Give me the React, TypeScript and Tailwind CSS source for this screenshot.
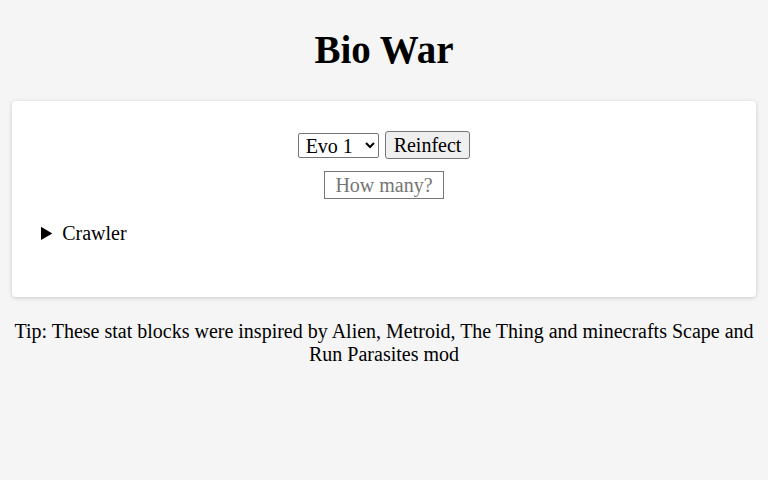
import React from 'react';

export default function App() {
  return (
    <div className="min-h-[480px] bg-[#f5f5f5] px-3 pt-[27px] text-[20px] leading-[23px] text-black" style={{ fontFamily: '"Liberation Serif", "Times New Roman", serif' }}>
      <h1 className="text-center text-[39px] font-bold leading-[45px]">Bio War</h1>
      <div className="mt-[29px] rounded-[4px] bg-white px-[29px] pb-[52px] pt-[30px] shadow-[0_1px_4px_rgba(0,0,0,0.18)]">
        <div className="flex items-center justify-center gap-[6px]">
          <select defaultValue="1" className="h-[25px] w-[81px] rounded-[2px] border border-[#767676] bg-white pl-[3px] text-[20px] leading-[23px]">
            <option value="1">Evo 1</option>
            <option value="2">Evo 2</option>
            <option value="3">Evo 3</option>
          </select>
          <button className="h-[28px] rounded-[3px] border border-[#767676] bg-[#efefef] px-2 text-[20px] leading-[23px]">Reinfect</button>
        </div>
        <div className="mt-[12px] flex justify-center">
          <input
            placeholder="How many?"
            className="h-[28px] w-[120px] border border-[#767676] bg-white text-center text-[20px] leading-[23px] placeholder:text-[#757575]"
          />
        </div>
        <details className="mt-[23px]">
          <summary className="cursor-pointer">Crawler</summary>
          <p className="mt-2">Evolution stage 1 parasite.</p>
        </details>
      </div>
      <p className="mt-[23px] text-center">
        Tip: These stat blocks were inspired by Alien, Metroid, The Thing and minecrafts Scape and Run Parasites mod
      </p>
    </div>
  );
}
